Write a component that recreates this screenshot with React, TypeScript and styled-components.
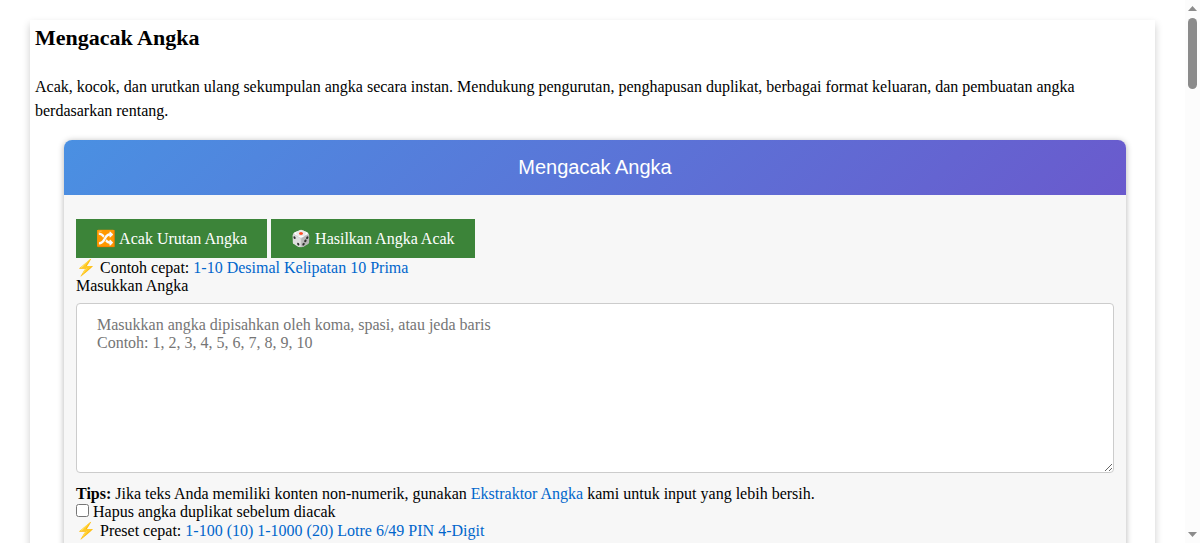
import React from "react";
import styled, { createGlobalStyle } from "styled-components";

const Global = createGlobalStyle`
  * { box-sizing: border-box; }
  body {
    margin: 0;
    background: #fff;
    color: #000;
    font-family: "Liberation Serif", "Times New Roman", serif;
    font-size: 16px;
  }
`;

const Viewport = styled.div`
  display: flex;
  height: 100vh;
  overflow: hidden;
`;

const Scroller = styled.div`
  flex: 1;
  min-width: 0;
  overflow-y: auto;
  scrollbar-width: none;
`;

const ScrollTrack = styled.div`
  display: flex;
  flex-direction: column;
  align-items: center;
  flex: 0 0 15px;
  padding: 6px 0;
  background: #fcfcfc;
`;

const ScrollThumb = styled.div`
  width: 9px;
  height: 71px;
  margin: 7px 0 auto;
  border-radius: 5px;
  background: #8b8b8b;
`;

const Page = styled.main`
  margin: 20px 30px;
  padding: 5px;
  background: #fff;
  box-shadow: 0 4px 8px rgba(0, 0, 0, 0.2);
`;

const Title = styled.h1`
  margin: 0;
  font-size: 22px;
  line-height: 26px;
`;

const Intro = styled.p`
  margin: 24px 0 17px;
  line-height: 24px;
`;

const Card = styled.section`
  margin: 0 24px 0 29px;
  border-radius: 8px;
  background: #f7f7f7;
  box-shadow: 0 1px 6px rgba(0, 0, 0, 0.3);
`;

const CardHeader = styled.h2`
  margin: 0;
  padding: 16px;
  border-radius: 8px 8px 0 0;
  background: linear-gradient(135deg, #4a90e2, #6a5acd);
  color: #fff;
  font: 20px/23px "Liberation Sans", Arial, sans-serif;
  text-align: center;
`;

const CardBody = styled.div`
  padding: 24px 12px;
`;

const Buttons = styled.div`
  display: flex;
  gap: 4px;
`;

const ModeButton = styled.button`
  padding: 10px 20px;
  border: 0;
  background: #3c8439;
  color: #fff;
  font: inherit;
  line-height: 19px;
  cursor: pointer;
`;

const Line = styled.div<{ $tall?: boolean }>`
  line-height: ${(p) => (p.$tall ? 19 : 18)}px;
`;

const CheckLine = styled.div`
  display: flex;
  align-items: flex-start;
  gap: 4px;
  height: 18px;
`;

const Link = styled.a`
  color: #0066cc;
  text-decoration: none;
`;

const Label = styled.label`
  line-height: 18px;
`;

const NumberInput = styled.textarea`
  display: block;
  width: 100%;
  height: 170px;
  margin: 8px 0 12px;
  padding: 12px 20px;
  border: 1px solid #ccc;
  border-radius: 4px;
  background: #fff;
  font: inherit;
  line-height: 18px;
  resize: both;
`;

const Checkbox = styled.input`
  width: 13px;
  height: 13px;
  margin: 1px 0 0;
`;

const Presets = ({ title, items }: { title: string; items: string[] }) => (
  <Line $tall>
    ⚡ {title}{" "}
    {items.map((item) => (
      <React.Fragment key={item}>
        <Link href="#">{item}</Link>{" "}
      </React.Fragment>
    ))}
  </Line>
);

export default function App() {
  return (
    <Viewport>
      <Global />
      <Scroller>
        <Page>
          <Title>Mengacak Angka</Title>
          <Intro>
            Acak, kocok, dan urutkan ulang sekumpulan angka secara instan. Mendukung pengurutan,
            penghapusan duplikat, berbagai format keluaran, dan pembuatan angka berdasarkan rentang.
          </Intro>
          <Card>
            <CardHeader>Mengacak Angka</CardHeader>
            <CardBody>
              <Buttons>
                <ModeButton type="button">🔀 Acak Urutan Angka</ModeButton>
                <ModeButton type="button">🎲 Hasilkan Angka Acak</ModeButton>
              </Buttons>
              <Presets title="Contoh cepat:" items={["1-10", "Desimal", "Kelipatan 10", "Prima"]} />
              <Label htmlFor="numbers">Masukkan Angka</Label>
              <NumberInput
                id="numbers"
                placeholder={"Masukkan angka dipisahkan oleh koma, spasi, atau jeda baris\nContoh: 1, 2, 3, 4, 5, 6, 7, 8, 9, 10"}
              />
              <Line>
                <strong>Tips:</strong> Jika teks Anda memiliki konten non-numerik, gunakan{" "}
                <Link href="#">Ekstraktor Angka</Link> kami untuk input yang lebih bersih.
              </Line>
              <CheckLine>
                <Checkbox id="dedupe" type="checkbox" />
                <Label htmlFor="dedupe">Hapus angka duplikat sebelum diacak</Label>
              </CheckLine>
              <Presets
                title="Preset cepat:"
                items={["1-100 (10)", "1-1000 (20)", "Lotre 6/49", "PIN 4-Digit"]}
              />
              <Line>Minimum</Line>
            </CardBody>
          </Card>
        </Page>
      </Scroller>
      <ScrollTrack aria-hidden="true">
        <svg width="9" height="5" viewBox="0 0 9 5">
          <path d="M0 5 4.500 0 9 5z" fill="#8b8b8b" />
        </svg>
        <ScrollThumb />
        <svg width="9" height="5" viewBox="0 0 9 5">
          <path d="M0 0h9L4.500 5z" fill="#8b8b8b" />
        </svg>
      </ScrollTrack>
    </Viewport>
  );
}
